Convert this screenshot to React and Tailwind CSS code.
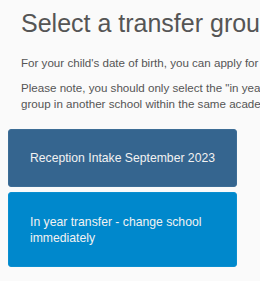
import React from 'react';

export default function App() {
  return (
    <div className="w-[260px] h-[281px] overflow-hidden bg-[#fafafa] font-['Liberation_Sans',Arial,sans-serif]">
      <div className="w-[600px] pt-[8px]">
        <h1 className="pl-[21px] text-[25px] leading-[30px] text-[#555555] font-normal whitespace-nowrap">
          Select a transfer group
        </h1>
        <p className="pl-[21px] mt-[17px] text-[11.6px] leading-[16px] text-[#555555] whitespace-nowrap">
          For your child's date of birth, you can apply for the following transfer groups.
        </p>
        <p className="pl-[21px] mt-[9px] text-[11.6px] leading-[16px] text-[#555555] whitespace-nowrap">
          Please note, you should only select the "in year transfer" option if your child is
          <br />
          group in another school within the same academic year.
        </p>
        <div className="ml-[8px] mt-[17px] w-[229px] flex flex-col gap-[5px]">
          <button className="text-left rounded-[3px] bg-[#35658f] border border-[#3d6d96] px-[21px] py-[20px] text-[12.2px] leading-[16px] text-[#f2f2f2]">
            Reception Intake September 2023
          </button>
          <button className="text-left rounded-[3px] bg-[#0088cc] border border-[#0a8fd0] px-[21px] py-[20.5px] text-[12.2px] leading-[16px] text-[#f2f2f2]">
            In year transfer - change school immediately
          </button>
        </div>
      </div>
    </div>
  );
}
